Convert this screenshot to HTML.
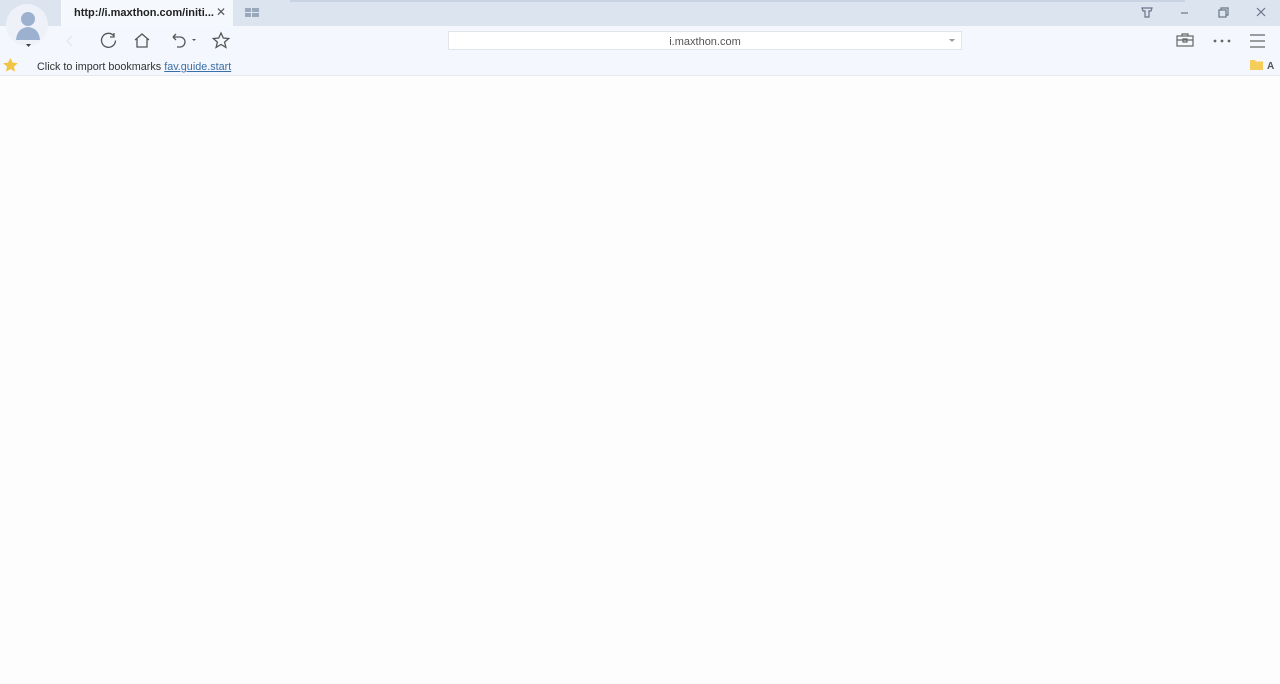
<!DOCTYPE html>
<html><head><meta charset="utf-8"><style>
*{margin:0;padding:0;box-sizing:border-box}
body{width:1280px;height:684px;overflow:hidden;background:#fdfdfe;font-family:"Liberation Sans",sans-serif;position:relative}
.title{position:absolute;left:0;top:0;width:1280px;height:26px;background:#dbe4ef}
.topline{position:absolute;left:290px;top:0;width:895px;height:2px;background:#c9d4e2}
.tab{position:absolute;left:61px;top:0;width:172px;height:26px;background:#f5f8fd}
.tab span{position:absolute;left:13px;top:7px;font-size:11px;font-weight:bold;color:#222}
.tab i{position:absolute;left:155px;top:5px;font-style:normal;font-size:12px;color:#555}
.tool{position:absolute;left:0;top:26px;width:1280px;height:50px;background:#f4f7fd;border-bottom:1px solid #e3e8ef}
.addr{position:absolute;left:448px;top:31px;width:514px;height:19px;background:#fff;border:1px solid #e1e5ea;font-size:11px;color:#555;text-align:center;line-height:20px}
.bm{position:absolute;left:37px;top:61px;font-size:10.8px;color:#333;line-height:13px}
.bm u{color:#3a6ea5}
.av{position:absolute;left:6px;top:4px;width:42px;height:42px;border-radius:50%;background:#eef2f8}
svg{position:absolute}
</style></head><body>
<div class="title"></div><div class="topline"></div>
<div class="tool"></div>
<div class="tab"><span>http://i.maxthon.com/initi...</span><i>✕</i></div>
<div class="av"></div>
<svg style="left:14px;top:8px" width="28" height="34" viewBox="0 0 28 34"><circle cx="14" cy="11" r="7" fill="#9bb1cf"/><path d="M2 32 Q3 20 14 19 Q25 20 26 32Z" fill="#9bb1cf"/></svg>
<svg style="left:26px;top:44px" width="5" height="4"><path d="M0 0h5L2.5 3z" fill="#444"/></svg>
<svg style="left:245px;top:8px" width="14" height="10"><rect x="0" y="0" width="6" height="4" fill="#9aa8bb"/><rect x="7" y="0" width="7" height="4" fill="#9aa8bb"/><rect x="0" y="5" width="6" height="4" fill="#9aa8bb"/><rect x="7" y="5" width="7" height="4" fill="#9aa8bb"/></svg>
<svg style="left:60px;top:30px" width="180" height="22" fill="none" stroke="#555" stroke-width="1.3">
<path d="M12 6l-5 5 5 5" stroke="#e4e8ee"/>
<path d="M54 6a7 7 0 1 0 1.5 4.5M54 3v4h-4"/>
<path d="M75 10l7-6 7 6M77 9v8h10V9"/>
<path d="M113 7h7a5 5 0 0 1 0 10h-3M113 7l3-3M113 7l3 3"/>
<path d="M132 9h4l-2 2z" fill="#555" stroke="none"/>
<path d="M161 3l2.3 5 5.4.5-4.1 3.6 1.3 5.3-4.9-2.9-4.9 2.9 1.3-5.3-4.1-3.6 5.4-.5z"/>
</svg>
<div class="addr">i.maxthon.com</div>
<svg style="left:949px;top:39px" width="6" height="4"><path d="M0 0h6L3 3z" fill="#999"/></svg>
<div class="bm">Click to import bookmarks <u>fav.guide.start</u></div>
<svg style="left:3px;top:58px" width="15" height="14"><path d="M7.5 0l2.2 4.6 5 .6-3.7 3.4 1 5-4.5-2.5-4.5 2.5 1-5L0 5.2l5-.6z" fill="#f2c443"/></svg>
<svg style="left:1250px;top:59px" width="30" height="12"><path d="M0 1h5l1 1.5h7V11H0z" fill="#f5cd5a"/><text x="17" y="10" font-size="10" font-weight="bold" fill="#555" font-family="Liberation Sans">A</text></svg>
<svg style="left:1138px;top:5px" width="135" height="16" fill="none" stroke="#6a7585" stroke-width="1.2">
<path d="M4 3h10l-1 3h-2v6H7V6H5z"/>
<path d="M43 8h7"/>
<rect x="81" y="5" width="7" height="7"/><path d="M83 5V3h7v7h-2"/>
<path d="M119 3l8 8M127 3l-8 8"/>
</svg>
<svg style="left:1175px;top:32px" width="100" height="18" fill="none" stroke="#666" stroke-width="1.2">
<rect x="2" y="4" width="16" height="10"/><path d="M7 4V2h6v2M2 8h16M8 7h4v3H8z"/>
<circle cx="40" cy="9" r=".8" fill="#666"/><circle cx="47" cy="9" r=".8" fill="#666"/><circle cx="54" cy="9" r=".8" fill="#666"/>
<path d="M75 3h15M75 9h15M75 15h15"/>
</svg>
</body></html>
